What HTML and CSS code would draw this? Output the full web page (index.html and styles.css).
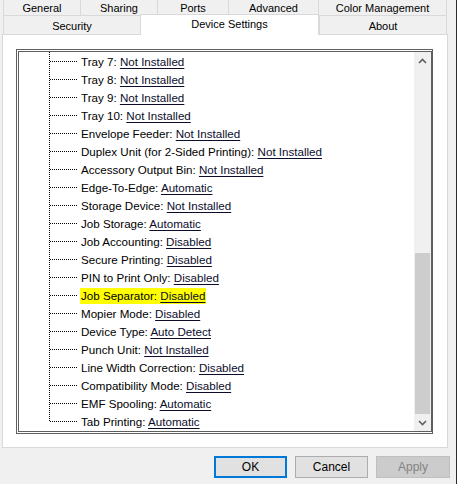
FILE: index.html
```html
<!DOCTYPE html>
<html>
<head>
<meta charset="utf-8">
<link rel="stylesheet" href="styles.css">
</head>
<body>
<div class="window">
  <div class="tabs">
    <div class="tabrow row1">
      <div class="tab">General</div>
      <div class="tab">Sharing</div>
      <div class="tab">Ports</div>
      <div class="tab">Advanced</div>
      <div class="tab last">Color Management</div>
    </div>
    <div class="tabrow row2">
      <div class="tab">Security</div>
      <div class="tab selected">Device Settings</div>
      <div class="tab last">About</div>
    </div>
  </div>
  <div class="panel">
    <div class="tree">
      <div class="tree-inner">
        <div class="list">
          <div class="row"><span class="branch"></span><span class="lbl">Tray 7: <u>Not Installed</u></span></div>
          <div class="row"><span class="branch"></span><span class="lbl">Tray 8: <u>Not Installed</u></span></div>
          <div class="row"><span class="branch"></span><span class="lbl">Tray 9: <u>Not Installed</u></span></div>
          <div class="row"><span class="branch"></span><span class="lbl">Tray 10: <u>Not Installed</u></span></div>
          <div class="row"><span class="branch"></span><span class="lbl">Envelope Feeder: <u>Not Installed</u></span></div>
          <div class="row"><span class="branch"></span><span class="lbl">Duplex Unit (for 2-Sided Printing): <u>Not Installed</u></span></div>
          <div class="row"><span class="branch"></span><span class="lbl">Accessory Output Bin: <u>Not Installed</u></span></div>
          <div class="row"><span class="branch"></span><span class="lbl">Edge-To-Edge: <u>Automatic</u></span></div>
          <div class="row"><span class="branch"></span><span class="lbl">Storage Device: <u>Not Installed</u></span></div>
          <div class="row"><span class="branch"></span><span class="lbl">Job Storage: <u>Automatic</u></span></div>
          <div class="row"><span class="branch"></span><span class="lbl">Job Accounting: <u>Disabled</u></span></div>
          <div class="row"><span class="branch"></span><span class="lbl">Secure Printing: <u>Disabled</u></span></div>
          <div class="row"><span class="branch"></span><span class="lbl">PIN to Print Only: <u>Disabled</u></span></div>
          <div class="row"><span class="branch"></span><span class="lbl hl">Job Separator: <u>Disabled</u></span></div>
          <div class="row"><span class="branch"></span><span class="lbl">Mopier Mode: <u>Disabled</u></span></div>
          <div class="row"><span class="branch"></span><span class="lbl">Device Type: <u>Auto Detect</u></span></div>
          <div class="row"><span class="branch"></span><span class="lbl">Punch Unit: <u>Not Installed</u></span></div>
          <div class="row"><span class="branch"></span><span class="lbl">Line Width Correction: <u>Disabled</u></span></div>
          <div class="row"><span class="branch"></span><span class="lbl">Compatibility Mode: <u>Disabled</u></span></div>
          <div class="row"><span class="branch"></span><span class="lbl">EMF Spooling: <u>Automatic</u></span></div>
          <div class="row lastrow"><span class="branch"></span><span class="lbl">Tab Printing: <u>Automatic</u></span></div>
        </div>
        <div class="scrollbar">
          <div class="arrow"><svg width="9" height="6" viewBox="0 0 9 6"><polyline points="1,5 4.5,1.5 8,5" fill="none" stroke="#606060" stroke-width="1.6"/></svg></div>
          <div class="track"><div class="thumb"></div></div>
          <div class="arrow"><svg width="9" height="6" viewBox="0 0 9 6"><polyline points="1,1 4.5,4.5 8,1" fill="none" stroke="#606060" stroke-width="1.6"/></svg></div>
        </div>
      </div>
    </div>
  </div>
  <div class="buttons">
    <div class="btn default">OK</div>
    <div class="btn">Cancel</div>
    <div class="btn disabled">Apply</div>
  </div>
</div>
</body>
</html>
```
FILE: styles.css
```css
html, body { margin: 0; padding: 0; background: #f0f0f0; }
.window {
  width: 456px;
  height: 484px;
  background: #f0f0f0;
  border-right: 1px solid #2b2b2b;
  font-family: "Liberation Sans", Arial, sans-serif;
  font-size: 11px;
  color: #000;
  overflow: hidden;
}
.tabs { padding-left: 3px; }
.tabrow { display: grid; width: 444px; }
.row1 { grid-template-columns: 77px 77px 71px 90px 129px; height: 15px; }
.row2 { grid-template-columns: 137px 179px 128px; height: 19px; align-items: start; }
.tab {
  box-sizing: border-box;
  border-left: 1px solid #d9d9d9;
  background: #f0f0f0;
  display: flex;
  align-items: center;
  justify-content: center;
  white-space: nowrap;
}
.tab.last { border-right: 1px solid #d9d9d9; }
.row1 .tab { height: 15px; padding-top: 1px; }
.row2 .tab { height: 19px; border-top: 1px solid #d9d9d9; padding-top: 2px; }
.row2 .tab.selected {
  position: relative;
  z-index: 1;
  height: 21px;
  margin-top: -1px;
  background: #fff;
  border-right: 1px solid #d9d9d9;
  padding-top: 0;
  padding-bottom: 2px;
}
.panel {
  box-sizing: border-box;
  margin-left: 2px;
  width: 446px;
  height: 414px;
  border: 1px solid #d9d9d9;
  background: #fff;
  padding: 14px 0 0 13px;
}
.tree {
  box-sizing: border-box;
  width: 417px;
  height: 385px;
  border: 1px solid #5f5f5f;
  padding: 1px 0 1px 1px;
  display: flex;
}
.tree-inner {
  flex: 1;
  display: flex;
  border: 1px solid #5f5f5f;
  min-width: 0;
}
.list {
  flex: 1;
  padding-left: 30px;
  overflow: hidden;
  min-width: 0;
  font-size: 11.6px;
}
.row {
  height: 18px;
  display: flex;
  align-items: center;
  white-space: nowrap;
}
.branch {
  flex: none;
  width: 32px;
  height: 18px;
  background-image:
    repeating-linear-gradient(to bottom, #000 0 1px, transparent 1px 2px),
    repeating-linear-gradient(to right, #000 0 1px, transparent 1px 2px);
  background-size: 1px 18px, 27px 1px;
  background-position: 0 0, 1px 9px;
  background-repeat: no-repeat;
}
.lastrow .branch { background-size: 1px 10px, 27px 1px; }
.lbl u { color: #0c0c2c; text-underline-offset: 2px; }
.lbl.hl {
  background: #ffff00;
  align-self: flex-end;
  height: 16px;
  line-height: 15px;
  margin-left: -1px;
  padding: 0 1px;
}
.scrollbar {
  flex: none;
  width: 17px;
  background: #f0f0f0;
  display: flex;
  flex-direction: column;
}
.arrow {
  height: 17px;
  display: flex;
  align-items: center;
  justify-content: center;
}
.track {
  flex: 1;
  display: flex;
  flex-direction: column;
  justify-content: flex-end;
  align-items: center;
}
.thumb { width: 15px; height: 161px; background: #cdcdcd; }
.buttons {
  display: flex;
  justify-content: flex-end;
  gap: 8px;
  padding: 8px 6px 0 0;
}
.btn {
  box-sizing: border-box;
  width: 73px;
  height: 22px;
  border: 1px solid #adadad;
  background: #e1e1e1;
  display: flex;
  align-items: center;
  justify-content: center;
  font-size: 12px;
}
.btn.default { border: 2px solid #0078d7; }
.btn.disabled { width: 74px; background: #cccccc; border-color: #bfbfbf; color: #838383; }
```
